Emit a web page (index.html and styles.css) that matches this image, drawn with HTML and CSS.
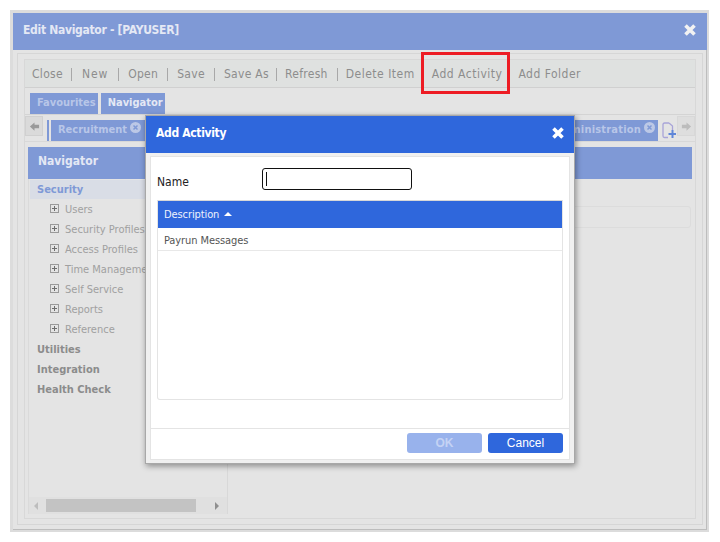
FILE: index.html
```html
<!DOCTYPE html>
<html lang="en">
<head>
<meta charset="utf-8">
<title>Edit Navigator</title>
<link rel="stylesheet" href="styles.css">
</head>
<body>
<div class="window">
  <header class="win-title">
    <span>Edit Navigator - [PAYUSER]</span>
    <svg class="x-icon" viewBox="0 0 14 14"><path d="M2.500 2.500 11.500 11.500M11.500 2.500 2.500 11.500"/></svg>
  </header>
  <div class="win-body">
    <div class="frame">
      <nav class="toolbar">
        <span class="tool">Close</span><span class="tool">New</span><span class="tool">Open</span><span class="tool">Save</span><span class="tool">Save As</span><span class="tool">Refresh</span><span class="tool plain">Delete Item</span><span class="tool plain">Add Activity</span><span class="tool plain">Add Folder</span>
      </nav>
      <div class="viewtabs">
        <span class="viewtab dim">Favourites</span>
        <span class="viewtab">Navigator</span>
      </div>
      <div class="tabstrip">
        <span class="scroll-btn"><svg viewBox="0 0 12 12"><path d="M1 6 6 1.500V4H11V8H6V10.500Z"/></svg></span>
        <span class="tab-bar"></span>
        <div class="tabs">
          <span class="tab">Recruitment <svg class="tab-x" viewBox="0 0 11 11"><circle cx="5.500" cy="5.500" r="5.500"/><path d="M3.500 3.500 7.500 7.500M7.500 3.500 3.500 7.500"/></svg></span>
          <span class="tab-fill"></span>
          <span class="tab tab-end">ministration <svg class="tab-x" viewBox="0 0 11 11"><circle cx="5.500" cy="5.500" r="5.500"/><path d="M3.500 3.500 7.500 7.500M7.500 3.500 3.500 7.500"/></svg></span>
        </div>
        <svg class="add-doc" viewBox="0 0 16 18"><path class="doc" d="M8 2H3.500Q2 2 2 3.500V15Q2 16.500 3.500 16.500H7M8 2 11.500 5V9"/><path class="plus" d="M11.500 9V17M7.500 13H15"/></svg>
        <span class="scroll-btn right"><svg viewBox="0 0 12 12"><path d="M11 6 6 1.500V4H1V8H6V10.500Z"/></svg></span>
      </div>
      <div class="panel-head">Navigator</div>
      <div class="content">
        <aside class="tree">
          <div class="tree-list">
            <div class="group active">Security</div>
            <div class="leaf"><i class="plus-box"></i>Users</div>
            <div class="leaf"><i class="plus-box"></i>Security Profiles</div>
            <div class="leaf"><i class="plus-box"></i>Access Profiles</div>
            <div class="leaf"><i class="plus-box"></i>Time Management</div>
            <div class="leaf"><i class="plus-box"></i>Self Service</div>
            <div class="leaf"><i class="plus-box"></i>Reports</div>
            <div class="leaf"><i class="plus-box"></i>Reference</div>
            <div class="group">Utilities</div>
            <div class="group">Integration</div>
            <div class="group">Health Check</div>
          </div>
          <div class="hscroll">
            <i class="arr left"></i>
            <span class="thumb"></span>
            <i class="arr rgt"></i>
          </div>
        </aside>
        <main class="detail"><div class="detail-box"></div></main>
      </div>
    </div>
  </div>
</div>

<div class="callout"></div>

<section class="modal">
  <header class="modal-title">
    <span>Add Activity</span>
    <svg class="x-icon" viewBox="0 0 14 14"><path d="M2.500 2.500 11.500 11.500M11.500 2.500 2.500 11.500"/></svg>
  </header>
  <div class="modal-body">
    <div class="modal-main">
      <div class="field">
        <label class="field-label">Name</label>
        <div class="field-input"><span class="caret"></span></div>
      </div>
      <div class="grid">
        <div class="grid-head">Description <i class="sort"></i></div>
        <div class="grid-row">Payrun Messages</div>
      </div>
    </div>
    <footer class="modal-foot">
      <button class="btn disabled">OK</button>
      <button class="btn">Cancel</button>
    </footer>
  </div>
</section>
</body>
</html>
```
FILE: styles.css
```css
* { box-sizing: border-box; }
html, body { margin: 0; height: 100%; background: #fff; overflow: hidden; }
body { font-family: "DejaVu Sans Condensed", "DejaVu Sans", sans-serif; font-size: 11px; color: #8a8a8a; }

.window {
  position: absolute; left: 10px; top: 10px; width: 699px; height: 522px;
  display: flex; flex-direction: column;
  background: #e4e4e4;
  border: 2px solid #dcdcdc;
  border-left-width: 3px; border-top-width: 3px;
  box-shadow: inset 0 -1px 0 #bdbdbd, inset -1px 0 0 #bdbdbd;
}
.win-title {
  height: 37px; flex: none; padding: 0 10px 4px 10px;
  background: #7f99d6; color: #e4e8f4; font-weight: bold; font-size: 12px; letter-spacing: -.3px;
  display: flex; align-items: center; justify-content: space-between;
}
.x-icon { width: 14px; height: 14px; fill: none; stroke: #f2f2f2; stroke-width: 3.600; }
.win-body { flex: 1; margin: 3px 4px 5px 4px; border: 1px solid #d6d6d6; padding: 5px 6px 5px 6px; display: flex; min-height: 0; }
.frame { flex: 1; border: 1px solid #d8d8d8; display: flex; flex-direction: column; min-width: 0; }

.toolbar { height: 28px; flex: none; background: #dfe1e0; border-bottom: 1px solid #d0d0d0; display: flex; align-items: center; padding: 1px 0 0 7px; }
.tool { color: #8d8d8d; font-size: 12px; letter-spacing: .3px; padding-right: 9px; margin-right: 9px; border-right: 1px solid #a8a8a8; line-height: 13px; white-space: nowrap; }
.tool:nth-child(1) { padding-right: 8px; margin-right: 10px; }
.tool:nth-child(2) { padding-right: 10px; letter-spacing: .9px; }
.tool:nth-child(5) { padding-right: 7px; margin-right: 8px; }
.tool:nth-child(6) { margin-right: 8px; }
.tool.plain { border-right: 0; padding-right: 0; margin-right: 17px; letter-spacing: .5px; }
.tool.plain:nth-child(8) { margin-right: 16px; }

.viewtabs { height: 27px; flex: none; display: flex; gap: 3px; padding: 5px 0 0 5px; border-bottom: 1px solid #d4d4d4; }
.viewtab { background: #7f99d6; color: #e4e8f4; font-weight: bold; font-size: 11px; padding: 3px 2px 0 7px; height: 21px; }
.viewtab.dim { color: #b8c6e8; }

.tabstrip { height: 27px; flex: none; display: flex; align-items: flex-start; border-bottom: 1px solid #d8d8d8; padding-top: 1px; }
.scroll-btn { width: 18px; height: 20px; background: #dadada; border: 1px solid #d0d0d0; display: flex; align-items: center; justify-content: center; flex: none; }
.scroll-btn svg { width: 11px; height: 11px; fill: #9a9a9a; }
.scroll-btn.right { background: #dedede; border-color: #d8d8d8; }
.scroll-btn.right svg { fill: #bcbcbc; }
.tab-bar { width: 2px; height: 21px; margin: 4px 2px 0 4px; background: #7f99d6; flex: none; }
.tabs { flex: 1; display: flex; margin-top: 4px; height: 21px; min-width: 0; }
.tab { background: #7f99d6; color: #b8c6e8; font-weight: bold; font-size: 11px; padding: 3px 3px 0 7px; display: flex; gap: 3px; white-space: nowrap; height: 21px; }
.tab-fill { flex: 1; background: #7f99d6; }
.tab-end { padding-left: 0; letter-spacing: .2px; }
.tab-x { width: 11px; height: 11px; margin-top: -1px; flex: none; }
.tab-x circle { fill: #bcc8e6; }
.tab-x path { stroke: #7f99d6; stroke-width: 1.500; fill: none; }
.add-doc { width: 16px; height: 18px; margin: 5px 0 0 3px; flex: none; fill: none; stroke-width: 1.300; }
.add-doc .doc { stroke: #a8a4d8; }
.add-doc .plus { stroke: #5f86d8; stroke-width: 2; }

.panel-head { height: 32px; flex: none; margin: 5px 3px 0 3px; background: #7f99d6; color: #e4e8f4; font-weight: bold; font-size: 12px; display: flex; align-items: center; padding: 0 0 4px 10px; }
.content { flex: 1; display: flex; min-height: 0; margin: 0 3px 4px 3px; }
.tree { width: 200px; flex: none; border-left: 1px solid #dadada; border-right: 1px solid #d8d8d8; display: flex; flex-direction: column; }
.tree-list { flex: 1; padding-top: 1px; overflow: hidden; }
.group { height: 20px; line-height: 21px; padding-left: 8px; font-weight: bold; color: #8c8c8c; font-size: 11px; white-space: nowrap; }
.group.active { background: #d9dde6; color: #7f99d6; margin-left: 1px; padding-left: 7px; height: 19px; line-height: 19px; }
.leaf { height: 20px; line-height: 20px; padding: 1px 0 0 21px; color: #a0a0a0; font-size: 11px; white-space: nowrap; display: flex; align-items: center; }
.plus-box { width: 9px; height: 9px; margin: -2px 6px 0 0; flex: none; border: 1px solid #9a9a9a; background: linear-gradient(#6c6c6c,#6c6c6c) center/5px 1px no-repeat, linear-gradient(#6c6c6c,#6c6c6c) center/1px 5px no-repeat, #e4e4e4; }
.hscroll { height: 17px; flex: none; background: #e0e0e0; display: flex; align-items: center; padding: 0 8px 0 5px; }
.hscroll .thumb { width: 153px; height: 13px; background: #c3c3c3; margin: 0 19px 0 8px; }
.arr { width: 0; height: 0; border-top: 4px solid transparent; border-bottom: 4px solid transparent; flex: none; }
.arr.left { border-right: 4px solid #bdbdbd; }
.arr.rgt { border-left: 4px solid #8f8f8f; }
.detail { flex: 1; padding: 27px 1px 0 0; }
.detail-box { height: 22px; border: 1px solid #dcdcdc; border-radius: 3px; }

.callout { position: absolute; left: 421px; top: 52px; width: 89px; height: 42px; border: 3px solid #ed1c24; }

.modal {
  position: absolute; left: 145px; top: 115px; width: 430px; height: 349px;
  border: 1px solid #a8a8a8; background: #f0f0f0;
  box-shadow: 1px 2px 6px rgba(0,0,0,.4);
  display: flex; flex-direction: column;
}
.modal-title { height: 37px; flex: none; background: #2f67dc; color: #fff; font-weight: bold; font-size: 12px; letter-spacing: -.33px; display: flex; align-items: center; justify-content: space-between; padding: 0 9px 4px 10px; }
.modal-title .x-icon { stroke: #fff; }
.modal-body { flex: 1; margin: 3px 4px 3px 4px; background: #fff; border: 1px solid #e4e4e4; display: flex; flex-direction: column; min-height: 0; }
.modal-main { flex: 1; padding: 11px 6px 0 6px; border-bottom: 1px solid #e4e4e4; }
.field { display: flex; align-items: center; height: 22px; }
.field-label { width: 105px; color: #222; font-size: 12px; padding-top: 5px; }
.field-input { width: 150px; height: 22px; border: 1px solid #111; border-radius: 3px; padding: 3px 0 0 3px; background: #fff; }
.caret { display: block; width: 1px; height: 14px; background: #111; }
.grid { margin-top: 10px; height: 200px; border: 1px solid #e4e4e4; border-top-color: #d8d8d8; border-radius: 0 0 3px 3px; }
.grid-head { height: 27px; background: #2f67dc; color: #eef2fc; font-size: 11px; letter-spacing: -.1px; display: flex; align-items: center; padding: 0 0 1px 6px; }
.sort { width: 0; height: 0; margin-left: 5px; border-left: 4px solid transparent; border-right: 4px solid transparent; border-bottom: 4px solid #fff; }
.grid-row { height: 23px; line-height: 25px; border-bottom: 1px solid #e8e8e8; padding-left: 6px; color: #555; font-size: 11px; letter-spacing: -.1px; }
.modal-foot { height: 30px; flex: none; display: flex; justify-content: flex-end; gap: 6px; padding: 4px 6px 0 0; }
.btn { width: 75px; height: 20px; border: 0; border-radius: 3px; background: #2f67dc; color: #fff; font: 12px "Liberation Sans", sans-serif; padding: 0; }
.btn.disabled { background: #98b2ec; color: #c4d2f4; font-weight: bold; }
```
